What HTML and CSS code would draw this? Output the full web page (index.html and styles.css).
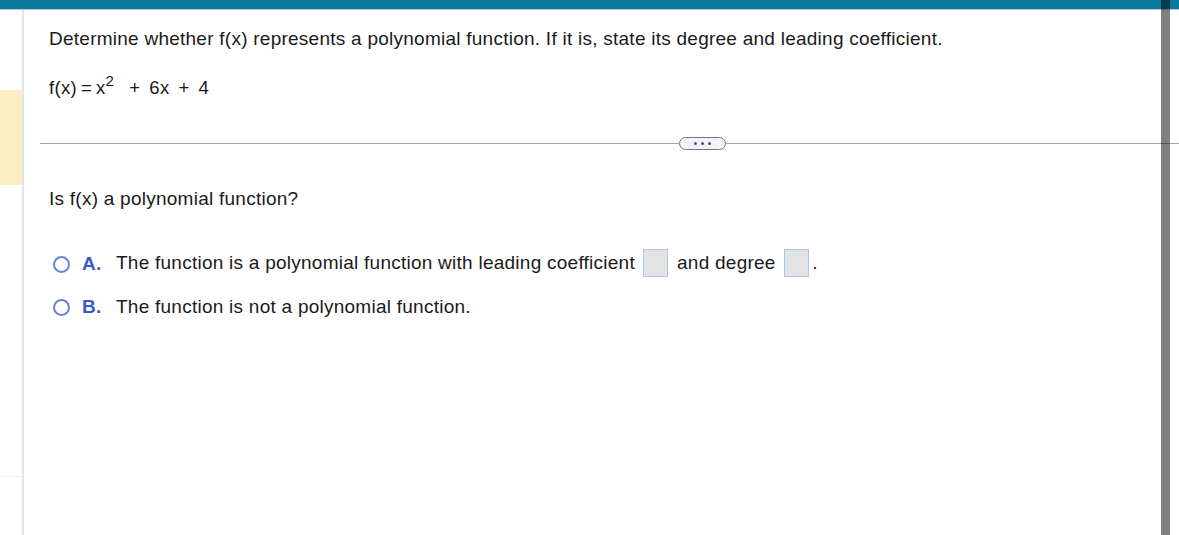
FILE: index.html
```html
<!DOCTYPE html>
<html>
<head>
<meta charset="utf-8">
<link rel="stylesheet" href="styles.css">
</head>
<body>
<div class="topbar"></div>
<div class="main">
  <div class="rail">
    <div class="rail-mark"></div>
    <div class="rail-line"></div>
  </div>
  <div class="content">
    <p class="question">Determine whether f(x) represents a polynomial function. If it is, state its degree and leading coefficient.</p>
    <p class="formula">f(x)<span class="eq">=</span>x<sup>2</sup><span class="op">+</span>6x<span class="op">+</span>4</p>
    <div class="divider">
      <span class="seg seg-left"></span>
      <span class="pill"><i></i><i></i><i></i></span>
      <span class="seg seg-right"></span>
    </div>
    <p class="ask">Is f(x) a polynomial function?</p>
    <ul class="options">
      <li class="option">
        <span class="radio"></span>
        <span class="letter">A.</span>
        <span class="opt-text">The function is a polynomial function with leading coefficient <span class="blank"></span> and degree <span class="blank"></span>.</span>
      </li>
      <li class="option">
        <span class="radio"></span>
        <span class="letter">B.</span>
        <span class="opt-text">The function is not a polynomial function.</span>
      </li>
    </ul>
  </div>
</div>
<div class="scrollbar"></div>
</body>
</html>
```
FILE: styles.css
```css
html, body {
  margin: 0;
  padding: 0;
  background: #ffffff;
  height: 100%;
  overflow: hidden;
}
body {
  font-family: "Liberation Sans", Arial, sans-serif;
  color: #1a1a1a;
  position: relative;
}
.topbar {
  height: 9px;
  background: #0a7a9c;
  border-bottom: 1px solid #b9cbdb;
}
.main {
  display: flex;
  height: 525px;
}
.rail {
  width: 22px;
  border-right: 2px solid #e2e3ec;
  display: flex;
  flex-direction: column;
}
.rail-mark {
  margin-top: 80px;
  height: 95px;
  background: #fbefc2;
}
.rail-line {
  margin-top: 291px;
  height: 1px;
  background: #f0f0f0;
}
.content {
  flex: 1;
  padding-left: 25px;
}
.question {
  margin: 18px 0 0;
  font-size: 19px;
  letter-spacing: 0.25px;
  line-height: 22px;
}
.formula {
  margin: 28px 0 0;
  font-size: 18.5px;
  letter-spacing: 0.3px;
  line-height: 20px;
}
.formula .eq {
  margin: 0 4px;
}
.formula .op {
  margin: 0 9px;
}
.formula sup {
  font-size: 15px;
  vertical-align: 8px;
  line-height: 0;
  margin-right: 6px;
}
.divider {
  display: flex;
  align-items: center;
  margin: 38px 0 0 -9px;
  height: 14px;
}
.seg {
  height: 1px;
  background: #9aa3b2;
}
.seg-left { width: 639px; }
.seg-right { flex: 1; }
.pill {
  width: 45px;
  height: 11px;
  border: 1.5px solid #6b7789;
  border-radius: 7px;
  background: #f1f3f6;
  display: flex;
  align-items: center;
  justify-content: center;
  gap: 4px;
}
.pill i {
  width: 3px;
  height: 3px;
  border-radius: 50%;
  background: #4a5566;
}
.ask {
  margin: 38px 0 0;
  font-size: 19px;
  letter-spacing: 0.25px;
  line-height: 22px;
}
.options {
  list-style: none;
  margin: 39px 0 0;
  padding: 0;
}
.option {
  display: flex;
  align-items: center;
  height: 30px;
  margin-bottom: 13px;
  font-size: 19px;
  letter-spacing: 0.25px;
}
.radio {
  width: 13px;
  height: 13px;
  border: 2px solid #6283d8;
  border-radius: 50%;
  margin-left: 4px;
  box-sizing: content-box;
}
.letter {
  font-weight: bold;
  color: #3a5bc7;
  margin-left: 12px;
  width: 34px;
}
.blank {
  display: inline-block;
  width: 23px;
  height: 26px;
  background: #e3e3e3;
  border: 1px solid #a9c4ef;
  vertical-align: middle;
  margin: 0 3px;
  position: relative;
  top: -1px;
}
.scrollbar {
  position: absolute;
  top: 0;
  right: 9px;
  width: 9px;
  height: 100%;
  background: rgba(0, 0, 0, 0.5);
}
```
